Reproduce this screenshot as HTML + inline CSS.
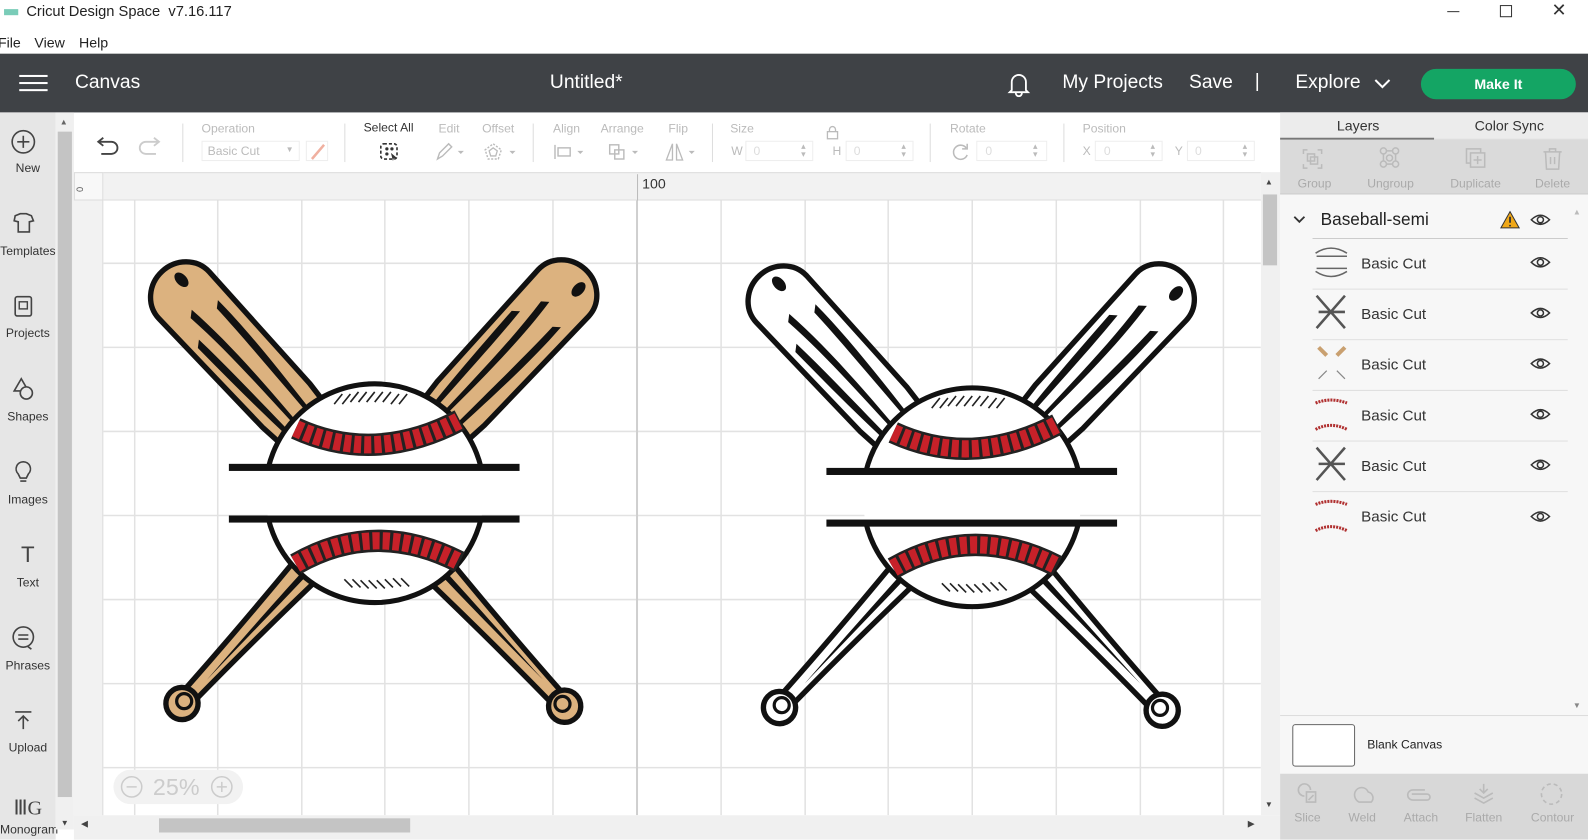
<!DOCTYPE html>
<html><head><meta charset="utf-8"><style>
*{margin:0;padding:0;box-sizing:border-box}
body{width:1588px;height:829px;overflow:hidden;font-family:"Liberation Sans",sans-serif;background:#fff;position:relative}
#root{position:absolute;left:0;top:0;width:1568px;height:819px;transform:scale(1.01276);transform-origin:0 0}
.a{position:absolute;white-space:nowrap}
.side{position:absolute;left:0;top:111px;width:55px;height:718px;background:#e6e6e6}
.sl{position:absolute;left:0;width:55px;text-align:center;font-size:12px;color:#333}
.tl{font-size:12px;color:#bbb;position:absolute}
.hd{color:#fff;font-size:19px;position:absolute}
.rt{position:absolute;font-size:12px;color:#aaa;text-align:center}
.row{position:absolute;left:1296px;width:252px;height:50px;border-bottom:1px solid #ddd;background:#f7f7f7}
.row span{position:absolute;left:48px;top:16px;font-size:15px;color:#333}
</style></head><body><div id="root">
<div class="a" style="left:4px;top:9px;width:14px;height:6px;background:#2a8;opacity:.6"></div>
<div class="a" style="left:26px;top:4px;font-size:14.5px;color:#222">Cricut Design Space&nbsp; v7.16.117</div>
<div class="a" style="left:1429px;top:11px;width:12px;height:1px;background:#333"></div>
<div class="a" style="left:1481px;top:5px;width:12px;height:12px;border:1px solid #333"></div>
<div class="a" style="left:1532px;top:0px;font-size:18px;color:#333">✕</div>
<div class="a" style="left:-2px;top:34px;font-size:14px;color:#222">File</div>
<div class="a" style="left:34px;top:34px;font-size:14px;color:#222">View</div>
<div class="a" style="left:78px;top:34px;font-size:14px;color:#222">Help</div>
<div class="a" style="left:0;top:53px;width:1600px;height:58px;background:#3f4246"></div>
<div class="a" style="left:19px;top:74px;width:28px;height:2px;background:#fff;box-shadow:0 7px 0 #fff,0 14px 0 #fff"></div>
<div class="hd" style="left:74px;top:71px">Canvas</div>
<div class="hd" style="left:543px;top:71px">Untitled*</div>
<svg class="a" style="left:994px;top:70px" width="24" height="26" viewBox="0 0 24 26"><path d="M5 19V11a7 7 0 0 1 14 0v8l2 2H3z M9 22a3 3 0 0 0 6 0" fill="none" stroke="#fff" stroke-width="1.8"/></svg>
<div class="hd" style="left:1049px;top:71px">My Projects</div>
<div class="hd" style="left:1174px;top:71px">Save</div>
<div class="hd" style="left:1239px;top:70px">|</div>
<div class="hd" style="left:1279px;top:71px">Explore</div>
<svg class="a" style="left:1356px;top:77px" width="18" height="12"><path d="M2 2l7 7 7-7" fill="none" stroke="#fff" stroke-width="2"/></svg>
<div class="a" style="left:1403px;top:68px;width:153px;height:30px;border-radius:15px;background:#14a564;color:#fff;font-size:14px;font-weight:bold;text-align:center;line-height:30px">Make It</div>
<div class="side"></div>
<svg class="a" style="left:10px;top:127px" width="26" height="26"><circle cx="13" cy="13" r="11" fill="none" stroke="#444" stroke-width="1.6"/><path d="M13 7v12M7 13h12" stroke="#444" stroke-width="1.6"/></svg>
<div class="sl" style="top:159px">New</div>
<svg class="a" style="left:11px;top:208px" width="24" height="24"><path d="M4 5l5-2h6l5 2 2 5-4 1v10H7V11L3 10z" fill="none" stroke="#444" stroke-width="1.6"/></svg>
<div class="sl" style="top:241px">Templates</div>
<svg class="a" style="left:12px;top:290px" width="22" height="24"><rect x="3" y="3" width="16" height="19" rx="2" fill="none" stroke="#444" stroke-width="1.6"/><rect x="7" y="8" width="8" height="7" fill="none" stroke="#444" stroke-width="1.4"/></svg>
<div class="sl" style="top:322px">Projects</div>
<svg class="a" style="left:11px;top:372px" width="24" height="24"><path d="M10 2l-7 12h14z" fill="none" stroke="#444" stroke-width="1.6"/><circle cx="15" cy="16" r="6" fill="#e6e6e6" stroke="#444" stroke-width="1.6"/></svg>
<div class="sl" style="top:404px">Shapes</div>
<svg class="a" style="left:12px;top:453px" width="22" height="26"><path d="M11 3a7 7 0 0 0-5 12l2 4h6l2-4a7 7 0 0 0-5-12zM8 22h6" fill="none" stroke="#444" stroke-width="1.6"/></svg>
<div class="sl" style="top:486px">Images</div>
<div class="sl" style="top:535px;font-size:22px;color:#444">T</div>
<div class="sl" style="top:568px">Text</div>
<svg class="a" style="left:10px;top:617px" width="26" height="26"><circle cx="13" cy="12" r="10" fill="none" stroke="#444" stroke-width="1.6"/><path d="M8 10h10M8 14h10M17 21l4 3" stroke="#444" stroke-width="1.6"/></svg>
<div class="sl" style="top:650px">Phrases</div>
<svg class="a" style="left:12px;top:700px" width="22" height="22"><path d="M3 3h16M11 20V7M6 12l5-5 5 5" fill="none" stroke="#444" stroke-width="1.6"/></svg>
<div class="sl" style="top:731px">Upload</div>
<div class="sl" style="top:785px;font-size:20px;color:#444;font-family:'Liberation Serif',serif">ⅢG</div>
<div class="sl" style="top:812px">Monogram</div>
<div class="a" style="left:55px;top:111px;width:18px;height:708px;background:#f0f0f0"></div>
<div class="a" style="left:57px;top:130px;width:14px;height:657px;background:#c4c4c4"></div>
<div class="a" style="left:59px;top:116px;font-size:8px;color:#666">▲</div>
<svg class="a" style="left:92px;top:133px" width="70" height="22"><path d="M6 7h12a6 6 0 0 1 0 12H8M10 3L5 7l5 4" fill="none" stroke="#444" stroke-width="1.8"/><path d="M64 7H52a6 6 0 0 0 0 12h10M60 3l5 4-5 4" fill="none" stroke="#ccc" stroke-width="1.8"/></svg>
<div class="a" style="left:180px;top:122px;width:1px;height:38px;background:#ddd"></div>
<div class="tl" style="left:199px;top:120px">Operation</div>
<div class="a" style="left:199px;top:139px;width:97px;height:20px;border:1px solid #eee"></div>
<div class="tl" style="left:205px;top:142px">Basic Cut</div>
<div class="tl" style="left:282px;top:143px;font-size:8px">▼</div>
<div class="a" style="left:302px;top:139px;width:22px;height:20px;border:1px solid #eee"></div>
<svg class="a" style="left:304px;top:140px" width="20" height="20"><path d="M4 17L16 3" stroke="#f0b0a0" stroke-width="2.5"/></svg>
<div class="a" style="left:340px;top:122px;width:1px;height:38px;background:#ddd"></div>
<div class="a" style="left:359px;top:119px;font-size:12px;color:#333">Select All</div>
<svg class="a" style="left:374px;top:140px" width="22" height="20"><rect x="2" y="2" width="16" height="15" rx="3" fill="none" stroke="#333" stroke-width="1.6" stroke-dasharray="3 2"/><circle cx="8" cy="7" r="1.6" fill="#333"/><circle cx="13" cy="7" r="1.6" fill="#333"/><circle cx="8" cy="12" r="1.6" fill="#333"/><path d="M12 11l6 5-3 0-1 3z" fill="#333"/></svg>
<div class="tl" style="left:433px;top:120px">Edit</div>
<svg class="a" style="left:430px;top:140px" width="32" height="20"><path d="M2 17l2-6 9-9 3 3-9 9z" fill="none" stroke="#bbb" stroke-width="1.4"/><path d="M22 9l3 3 3-3z" fill="#bbb"/></svg>
<div class="tl" style="left:476px;top:120px">Offset</div>
<svg class="a" style="left:477px;top:140px" width="34" height="20"><path d="M10 2l8 6-3 9H5L2 8z" fill="none" stroke="#bbb" stroke-width="1.4" stroke-dasharray="2 1.5"/><path d="M10 6l4 3-1.5 5h-5L6 9z" fill="none" stroke="#bbb" stroke-width="1.3"/><path d="M26 9l3 3 3-3z" fill="#bbb"/></svg>
<div class="a" style="left:526px;top:122px;width:1px;height:38px;background:#ddd"></div>
<div class="tl" style="left:546px;top:120px">Align</div>
<svg class="a" style="left:546px;top:140px" width="34" height="20"><path d="M2 3v14" stroke="#bbb" stroke-width="1.4"/><rect x="5" y="6" width="12" height="8" fill="none" stroke="#bbb" stroke-width="1.4"/><path d="M24 9l3 3 3-3z" fill="#bbb"/></svg>
<div class="tl" style="left:593px;top:120px">Arrange</div>
<svg class="a" style="left:600px;top:140px" width="34" height="20"><rect x="2" y="3" width="9" height="9" fill="none" stroke="#bbb" stroke-width="1.4"/><rect x="7" y="8" width="9" height="9" fill="none" stroke="#bbb" stroke-width="1.4"/><path d="M24 9l3 3 3-3z" fill="#bbb"/></svg>
<div class="tl" style="left:660px;top:120px">Flip</div>
<svg class="a" style="left:656px;top:140px" width="34" height="20"><path d="M8 2L2 18h6zM12 2l6 16h-6z" fill="none" stroke="#bbb" stroke-width="1.3"/><path d="M24 9l3 3 3-3z" fill="#bbb"/></svg>
<div class="a" style="left:703px;top:122px;width:1px;height:38px;background:#ddd"></div>
<div class="tl" style="left:721px;top:120px">Size</div>
<svg class="a" style="left:815px;top:123px" width="14" height="16"><rect x="2" y="7" width="10" height="7" fill="none" stroke="#bbb" stroke-width="1.3"/><path d="M4 7V5a3 3 0 0 1 6 0v2" fill="none" stroke="#bbb" stroke-width="1.3"/></svg>
<div class="tl" style="left:722px;top:142px">W</div>
<div class="a" style="left:736px;top:139px;width:67px;height:20px;border:1px solid #eee"></div>
<div class="tl" style="left:744px;top:142px;color:#ddd">0</div>
<div class="tl" style="left:791px;top:140px;font-size:9px;line-height:8px">▴<br>▾</div>
<div class="tl" style="left:822px;top:142px">H</div>
<div class="a" style="left:835px;top:139px;width:67px;height:20px;border:1px solid #eee"></div>
<div class="tl" style="left:843px;top:142px;color:#ddd">0</div>
<div class="tl" style="left:890px;top:140px;font-size:9px;line-height:8px">▴<br>▾</div>
<div class="a" style="left:918px;top:122px;width:1px;height:38px;background:#ddd"></div>
<div class="tl" style="left:938px;top:120px">Rotate</div>
<svg class="a" style="left:938px;top:140px" width="22" height="20"><path d="M16 6a7 7 0 1 0 1 7M17 2v5h-5" fill="none" stroke="#bbb" stroke-width="1.5"/></svg>
<div class="a" style="left:964px;top:139px;width:70px;height:20px;border:1px solid #eee"></div>
<div class="tl" style="left:973px;top:142px;color:#ddd">0</div>
<div class="tl" style="left:1020px;top:140px;font-size:9px;line-height:8px">▴<br>▾</div>
<div class="a" style="left:1050px;top:122px;width:1px;height:38px;background:#ddd"></div>
<div class="tl" style="left:1069px;top:120px">Position</div>
<div class="tl" style="left:1069px;top:142px">X</div>
<div class="a" style="left:1081px;top:139px;width:67px;height:20px;border:1px solid #eee"></div>
<div class="tl" style="left:1090px;top:142px;color:#ddd">0</div>
<div class="tl" style="left:1136px;top:140px;font-size:9px;line-height:8px">▴<br>▾</div>
<div class="tl" style="left:1160px;top:142px">Y</div>
<div class="a" style="left:1172px;top:139px;width:67px;height:20px;border:1px solid #eee"></div>
<div class="tl" style="left:1180px;top:142px;color:#ddd">0</div>
<div class="tl" style="left:1227px;top:140px;font-size:9px;line-height:8px">▴<br>▾</div>
<div class="a" style="left:73px;top:170px;width:1172px;height:28px;background:#f2f2f2;border-bottom:1px solid #ddd;border-top:1px solid #ddd"></div>
<div class="a" style="left:73px;top:170px;width:29px;height:635px;background:#f2f2f2;border-right:1px solid #ddd"></div>
<div class="a" style="left:73px;top:170px;width:29px;height:28px;background:#f8f8f8;border:1px solid #ddd"></div>
<div class="a" style="left:76px;top:182px;font-size:9px;color:#555;transform:rotate(90deg)">0</div>
<div class="a" style="left:634px;top:173px;font-size:14px;color:#333">100</div>
<div class="a" style="left:629px;top:172px;width:1px;height:26px;background:#bbb"></div>
<svg class="a" style="left:102px;top:198px" width="1143" height="607">
<g stroke="#e2e2e2" stroke-width="1.5">
<path d="M31 0V607M113 0V607M196 0V607M278 0V607M361 0V607M444 0V607M610 0V607M693 0V607M775 0V607M858 0V607M941 0V607M1024 0V607M1106 0V607"/>
<path d="M0 62H1143M0 145H1143M0 228H1143M0 311H1143M0 394H1143M0 477H1143M0 560H1143"/>
</g>
<path d="M527 0V607" stroke="#cfcfcf" stroke-width="2"/>
</svg>
<svg class="a" style="left:0;top:0" width="1245" height="805" viewBox="0 0 1245 805">
<defs>
<g id="bat">
<path d="M30,-32 L170,-30 C300,-18 420,-10 540,-7 L540,7 C420,10 300,18 170,30 L30,32 A30,32 0 0 1 30,-32 Z" stroke="#111" stroke-width="5"/>
<circle cx="552" cy="0" r="15" stroke="#111" stroke-width="5"/>
<circle cx="549" cy="0" r="7" fill="none" stroke="#111" stroke-width="3"/>
<g fill="#111" stroke="none">
<ellipse cx="18" cy="-8" rx="8" ry="5"/>
<path d="M55,-20 C110,-22 180,-14 260,-8 C180,-9 110,-14 60,-14z"/>
<path d="M45,4 C100,-2 170,2 250,6 C170,8 110,4 50,10z"/>
<path d="M70,18 C130,14 200,16 280,10 C200,20 140,22 75,24z"/>
<path d="M300,-4 C380,-5 440,-3 520,-2 C440,1 380,2 300,2z"/>
</g>
</g>
<g id="ball">
<circle cx="0" cy="0" r="108" fill="#fff"/>
<clipPath id="cp"><path d="M-150,-150H150V-26H-150zM-150,25H150V150H-150z"/></clipPath>
<circle cx="0" cy="0" r="108" fill="none" stroke="#111" stroke-width="5" clip-path="url(#cp)"/>
<rect x="-144" y="-29" width="287" height="7" fill="#111"/>
<rect x="-144" y="22" width="287" height="7" fill="#111"/>
<path d="M-78,-64 Q0,-28 84,-72" fill="none" stroke="#222" stroke-width="22"/>
<path d="M-78,-64 Q0,-28 84,-72" fill="none" stroke="#c72129" stroke-width="17" stroke-dasharray="7 3"/>
<path d="M-78,70 Q0,25 84,68" fill="none" stroke="#222" stroke-width="22" clip-path="url(#cp)"/>
<path d="M-78,70 Q0,25 84,68" fill="none" stroke="#c72129" stroke-width="17" stroke-dasharray="7 3" clip-path="url(#cp)"/>
<g stroke="#222" stroke-width="1.6">
<path d="M-40,-88l8,-10M-32,-88l8,-10M-24,-90l8,-10M-16,-90l8,-10M-8,-90l8,-10M0,-90l8,-10M8,-90l8,-10M16,-88l8,-10M24,-88l8,-10"/>
<path d="M-30,85l8,8M-22,85l8,8M-14,86l8,8M-6,86l8,8M2,86l8,8M10,85l8,8M18,84l8,8M26,84l8,8"/>
</g>
</g>
<g id="design">
<use href="#bat" transform="translate(160,268) rotate(47.2) scale(1.06)"/>
<use href="#bat" transform="translate(578,266) rotate(132.9) scale(1.06)"/>
<use href="#ball" transform="translate(370,487)"/>
</g>
</defs>
<g fill="#dcb27f"><use href="#design"/></g>
<g fill="#fff"><use href="#design" transform="translate(590,4)"/></g>
</svg>
<div class="a" style="left:112px;top:760px;width:128px;height:34px;border-radius:17px;background:#f2f2f2"></div>
<svg class="a" style="left:118px;top:765px" width="116" height="24"><circle cx="12" cy="12" r="10" fill="none" stroke="#ccc" stroke-width="1.5"/><path d="M7 12h10" stroke="#ccc" stroke-width="1.5"/><circle cx="101" cy="12" r="10" fill="none" stroke="#ccc" stroke-width="1.5"/><path d="M96 12h10M101 7v10" stroke="#ccc" stroke-width="1.5"/></svg>
<div class="a" style="left:151px;top:764px;font-size:23px;color:#ccc">25%</div>
<div class="a" style="left:1245px;top:170px;width:19px;height:635px;background:#f0f0f0"></div>
<div class="a" style="left:1247px;top:192px;width:14px;height:70px;background:#c4c4c4"></div>
<div class="a" style="left:1249px;top:175px;font-size:8px;color:#444">▲</div>
<div class="a" style="left:1249px;top:790px;font-size:8px;color:#444">▼</div>
<div class="a" style="left:73px;top:805px;width:1191px;height:24px;background:#f0f0f0"></div>
<div class="a" style="left:157px;top:808px;width:248px;height:14px;background:#c4c4c4"></div>
<div class="a" style="left:60px;top:808px;font-size:8px;color:#444">▼</div>
<div class="a" style="left:80px;top:808px;font-size:9px;color:#444">◀</div>
<div class="a" style="left:1232px;top:808px;font-size:9px;color:#444">▶</div>
<div class="a" style="left:1264px;top:111px;width:330px;height:718px;background:#f7f7f7"></div>
<div class="a" style="left:1264px;top:111px;width:330px;height:27px;background:#ececec"></div>
<div class="a" style="left:1320px;top:116px;font-size:14px;color:#333">Layers</div>
<div class="a" style="left:1456px;top:116px;font-size:14px;color:#333">Color Sync</div>
<div class="a" style="left:1264px;top:136px;width:152px;height:2px;background:#777"></div>
<div class="a" style="left:1416px;top:137px;width:172px;height:1px;background:#ddd"></div>
<div class="a" style="left:1264px;top:138px;width:330px;height:54px;background:#dadada;border-bottom:1px solid #ccc"></div>
<svg class="a" style="left:1284px;top:145px" width="280" height="26" fill="none" stroke="#bbb" stroke-width="1.5">
<path d="M3 7V3h4M17 3h4v4M21 17v4h-4M7 21H3v-4"/><rect x="7" y="7" width="7" height="7"/><rect x="10" y="10" width="7" height="7"/>
<g transform="translate(77,0)"><circle cx="5" cy="4" r="3"/><circle cx="17" cy="4" r="3"/><circle cx="5" cy="17" r="3"/><circle cx="17" cy="17" r="3"/><circle cx="11" cy="11" r="3"/><path d="M8 4h6M5 7v7M17 7v7M8 17h6"/></g>
<g transform="translate(162,0)"><rect x="2" y="2" width="14" height="14"/><rect x="6" y="6" width="14" height="14" fill="#dadada"/><path d="M13 9v8M9 13h8"/></g>
<g transform="translate(238,0)"><path d="M2 5h18M8 5V2h6v3M4 5l1 17h12l1-17M9 10v7M13 10v7"/></g>
</svg>
<div class="rt" style="left:1272px;top:174px;width:52px">Group</div>
<div class="rt" style="left:1340px;top:174px;width:66px">Ungroup</div>
<div class="rt" style="left:1426px;top:174px;width:62px">Duplicate</div>
<div class="rt" style="left:1510px;top:174px;width:46px">Delete</div>
<svg class="a" style="left:1276px;top:211px" width="14" height="12"><path d="M2 3l5 5 5-5" fill="none" stroke="#333" stroke-width="1.8"/></svg>
<div class="a" style="left:1304px;top:207px;font-size:17px;color:#222">Baseball-semi</div>
<svg class="a" style="left:1481px;top:208px" width="20" height="18"><path d="M10 1L19 17H1z" fill="#f0a818" stroke="#333" stroke-width="1"/><path d="M10 6v6M10 14v1.5" stroke="#333" stroke-width="1.8"/></svg>
<svg class="a" style="left:1511px;top:210px" width="20" height="14"><path d="M1 7Q10 -2 19 7Q10 16 1 7z" fill="none" stroke="#333" stroke-width="1.5"/><circle cx="10" cy="7" r="3" fill="none" stroke="#333" stroke-width="1.5"/></svg>
<div class="a" style="left:1296px;top:235px;width:252px;height:1px;background:#ccc"></div>
<div class="a" style="left:1553px;top:205px;font-size:8px;color:#bbb">▲</div>
<div class="a" style="left:1553px;top:692px;font-size:8px;color:#888">▼</div>
<div class="row" style="top:236px"><span>Basic Cut</span></div>
<div class="row" style="top:286px"><span>Basic Cut</span></div>
<div class="row" style="top:336px"><span>Basic Cut</span></div>
<div class="row" style="top:386px"><span>Basic Cut</span></div>
<div class="row" style="top:436px"><span>Basic Cut</span></div>
<div class="row" style="top:486px;border:none"><span>Basic Cut</span></div>
<svg class="a" style="left:1296px;top:240px" width="240" height="290">
<defs><g id="eye"><path d="M1 7Q10 -2 19 7Q10 16 1 7z" fill="none" stroke="#333" stroke-width="1.5"/><circle cx="10" cy="7" r="3" fill="none" stroke="#333" stroke-width="1.5"/></g></defs>
<use href="#eye" x="215" y="12"/><use href="#eye" x="215" y="62"/><use href="#eye" x="215" y="112"/><use href="#eye" x="215" y="162"/><use href="#eye" x="215" y="212"/><use href="#eye" x="215" y="263"/>
<g fill="none" stroke="#666" stroke-width="1.5"><path d="M3 10Q18 0 34 10M3 28Q18 38 34 28M4 13h30M4 25h30"/></g>
<g stroke="#555" stroke-width="2.5" fill="none"><path d="M4 52l28 32M32 52L4 84M6 68h26"/></g>
<g stroke-width="4"><path d="M6 103l8 8M32 103l-8 8" stroke="#c9a070"/><path d="M6 134l8-8M32 134l-8-8" stroke="#888" stroke-width="1.2"/></g>
<g stroke="#b03030" stroke-width="3" fill="none" stroke-dasharray="2 1"><path d="M3 158Q18 152 34 158M3 184Q18 176 34 184"/></g>
<g stroke="#555" stroke-width="2.5" fill="none"><path d="M4 202l28 32M32 202L4 234M6 218h26"/></g>
<g stroke="#b03030" stroke-width="3" fill="none" stroke-dasharray="2 1"><path d="M3 258Q18 252 34 258M3 284Q18 276 34 284"/></g>
</svg>
<div class="a" style="left:1264px;top:706px;width:330px;height:1px;background:#ddd"></div>
<div class="a" style="left:1276px;top:715px;width:62px;height:42px;border:1px solid #666;border-radius:3px;background:#fff"></div>
<div class="a" style="left:1350px;top:728px;font-size:12px;color:#222">Blank Canvas</div>
<div class="a" style="left:1264px;top:764px;width:330px;height:65px;background:#d8d8d8"></div>
<svg class="a" style="left:1278px;top:772px" width="300" height="26" fill="none" stroke="#bbb" stroke-width="1.6">
<path d="M10 14a6 6 0 1 1 6-6M12 10h9v10h-9zM14 18l5-5"/>
<path d="M60 10a7 7 0 0 1 13 0a6 6 0 0 1 3 10h-12a8 8 0 0 1-4-10z"/>
<path d="M116 12h15a3 3 0 0 1 0 6h-14a5 5 0 0 1 0-10h12"/>
<path d="M187 2v8M183 7l4 4 4-4M178 11l9 5 9-5M178 16l9 5 9-5"/>
<circle cx="254" cy="12" r="10" stroke-dasharray="4 3"/>
</svg>
<div class="rt" style="left:1270px;top:800px;width:42px">Slice</div>
<div class="rt" style="left:1325px;top:800px;width:40px">Weld</div>
<div class="rt" style="left:1380px;top:800px;width:46px">Attach</div>
<div class="rt" style="left:1440px;top:800px;width:50px">Flatten</div>
<div class="rt" style="left:1505px;top:800px;width:56px">Contour</div>
</div></body></html>
